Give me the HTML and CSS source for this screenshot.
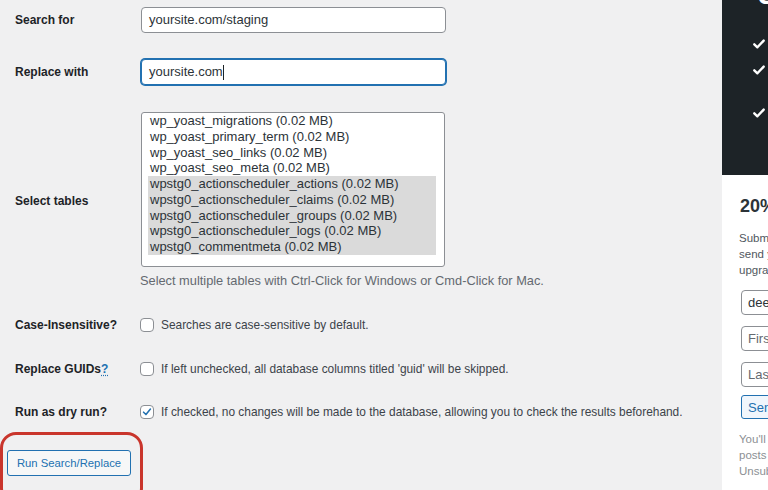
FILE: index.html
```html
<!DOCTYPE html>
<html lang="en">
<head>
<meta charset="utf-8">
<title>Search &amp; Replace</title>
<link rel="stylesheet" href="styles.css">
</head>
<body>
<div class="page">
  <main class="main">
    <div class="row row-search">
      <div class="label">Search for</div>
      <div class="field"><div class="text-input">yoursite.com/staging</div></div>
    </div>
    <div class="row row-replace">
      <div class="label">Replace with</div>
      <div class="field"><div class="text-input focused">yoursite.com<span class="caret"></span></div></div>
    </div>
    <div class="row row-tables">
      <div class="label">Select tables</div>
      <div class="field">
        <div class="listbox">
          <div class="option">wp_yoast_migrations (0.02 MB)</div>
          <div class="option">wp_yoast_primary_term (0.02 MB)</div>
          <div class="option">wp_yoast_seo_links (0.02 MB)</div>
          <div class="option">wp_yoast_seo_meta (0.02 MB)</div>
          <div class="option selected">wpstg0_actionscheduler_actions (0.02 MB)</div>
          <div class="option selected">wpstg0_actionscheduler_claims (0.02 MB)</div>
          <div class="option selected">wpstg0_actionscheduler_groups (0.02 MB)</div>
          <div class="option selected">wpstg0_actionscheduler_logs (0.02 MB)</div>
          <div class="option selected">wpstg0_commentmeta (0.02 MB)</div>
        </div>
        <p class="help">Select multiple tables with Ctrl-Click for Windows or Cmd-Click for Mac.</p>
      </div>
    </div>
    <div class="row row-check row-first-check">
      <div class="label">Case-Insensitive?</div>
      <div class="field check-field"><span class="checkbox"></span><span class="desc">Searches are case-sensitive by default.</span></div>
    </div>
    <div class="row row-check">
      <div class="label">Replace GUIDs<a class="help-link" href="#">?</a></div>
      <div class="field check-field"><span class="checkbox"></span><span class="desc">If left unchecked, all database columns titled 'guid' will be skipped.</span></div>
    </div>
    <div class="row row-check row-last-check">
      <div class="label">Run as dry run?</div>
      <div class="field check-field"><span class="checkbox checked"><svg viewBox="0 0 14 14" width="12" height="12"><polyline points="3,7.2 5.8,10 11,3.6" fill="none" stroke="#2271b1" stroke-width="1.8" stroke-linecap="round" stroke-linejoin="round"/></svg></span><span class="desc">If checked, no changes will be made to the database, allowing you to check the results beforehand.</span></div>
    </div>
    <div class="actions">
      <button class="button" type="button">Run Search/Replace</button>
    </div>
    <div class="highlight"></div>
  </main>
  <aside class="sidebar">
    <div class="promo">
      <div class="promo-title">Upgrade to Pro</div>
      <ul class="promo-list">
        <li><svg class="tick" viewBox="0 0 12 10" width="12" height="10"><polyline points="1.3,5.3 4.4,8.3 10.7,1.6" fill="none" stroke="#fff" stroke-width="2.4" stroke-linecap="round" stroke-linejoin="round"/></svg><span>Push staging sites to live</span></li>
        <li><svg class="tick" viewBox="0 0 12 10" width="12" height="10"><polyline points="1.3,5.3 4.4,8.3 10.7,1.6" fill="none" stroke="#fff" stroke-width="2.4" stroke-linecap="round" stroke-linejoin="round"/></svg><span>Backup and restore<br>your whole website</span></li>
        <li><svg class="tick" viewBox="0 0 12 10" width="12" height="10"><polyline points="1.3,5.3 4.4,8.3 10.7,1.6" fill="none" stroke="#fff" stroke-width="2.4" stroke-linecap="round" stroke-linejoin="round"/></svg><span>Priority support</span></li>
      </ul>
    </div>
    <div class="coupon">
      <h2 class="coupon-title">20% off WP Staging Pro</h2>
      <p class="coupon-text">Submit your email address and we'll<br>send you a discount coupon to<br>upgrade to WP Staging Pro.</p>
      <div class="side-input filled">deepak@example.com</div>
      <div class="side-input">First Name</div>
      <div class="side-input">Last Name</div>
      <button class="side-button" type="button">Send me the coupon</button>
      <p class="coupon-note">You'll also receive occasional blog<br>posts and product updates.<br>Unsubscribe anytime.</p>
    </div>
  </aside>
</div>
</body>
</html>
```
FILE: styles.css
```css
html, body {
  margin: 0;
  padding: 0;
  width: 768px;
  height: 490px;
  overflow: hidden;
}

body {
  background: #f0f0f1;
  font-family: "Liberation Sans", Arial, sans-serif;
  color: #1d2327;
}

.page {
  display: flex;
  height: 490px;
  overflow: hidden;
}

.main {
  position: relative;
  flex: none;
  width: 722px;
  box-sizing: border-box;
  padding-left: 15px;
}

.row {
  display: grid;
  grid-template-columns: 126px 560px;
  align-items: center;
}

.row-search { height: 39px; }
.row-replace { height: 66px; }
.row-tables { padding-top: 7px; }
.row-check { height: 44px; }
.row-first-check { margin-top: 14px; }
.row-last-check { height: 42px; }

.label {
  font-size: 12px;
  font-weight: bold;
  color: #1d2327;
  white-space: nowrap;
}

.help-link {
  color: #2271b1;
  text-decoration: underline dotted;
  text-underline-offset: 2px;
}

.text-input {
  width: 305px;
  height: 26px;
  box-sizing: border-box;
  border: 1px solid #8c8f94;
  border-radius: 4px;
  background: #fff;
  padding: 0 7px;
  font-size: 13px;
  line-height: 24px;
  color: #2c3338;
  display: flex;
  align-items: center;
}

.text-input.focused {
  border-color: #2271b1;
  box-shadow: 0 0 0 1px #2271b1;
}

.caret {
  display: inline-block;
  width: 1px;
  height: 15px;
  background: #1d2327;
}

.listbox {
  width: 304px;
  height: 155px;
  box-sizing: border-box;
  border: 1px solid #8c8f94;
  border-radius: 3px;
  background: #fff;
  padding-top: 0;
  font-size: 13px;
  line-height: 15.75px;
  color: #2c3338;
  overflow: hidden;
}

.option {
  margin: 0 8px 0 6px;
  padding-left: 2px;
  white-space: nowrap;
}

.option.selected {
  background: #dadada;
}

.help {
  margin: 5px 0 0 -1px;
  font-size: 12.8px;
  line-height: 17px;
  color: #646970;
  white-space: nowrap;
}

.check-field {
  display: flex;
  align-items: center;
  margin-left: -1px;
}

.checkbox {
  flex: none;
  width: 14px;
  height: 14px;
  box-sizing: border-box;
  border: 1px solid #8c8f94;
  border-radius: 4px;
  background: #fff;
  display: flex;
  align-items: center;
  justify-content: center;
}

.desc {
  margin-left: 7px;
  font-size: 11.9px;
  color: #3c434a;
  white-space: nowrap;
}

.actions {
  margin: 17px 0 0 -8px;
}

.button {
  width: 124px;
  height: 26px;
  box-sizing: border-box;
  border: 1px solid #2271b1;
  border-radius: 3px;
  background: #f6f7f7;
  color: #2271b1;
  font-family: "Liberation Sans", Arial, sans-serif;
  font-size: 11.3px;
  padding: 0;
}

.highlight {
  position: absolute;
  left: 0;
  top: 432px;
  width: 143px;
  height: 72px;
  box-sizing: border-box;
  border: 3px solid #c9352c;
  border-radius: 16px;
}

.sidebar {
  flex: none;
  width: 300px;
  display: flex;
  flex-direction: column;
}

.promo {
  height: 175px;
  background: #1d2327;
  color: #fff;
  padding-left: 31px;
  overflow: hidden;
}

.promo-title {
  margin: -19px 0 0 4px;
  font-size: 28px;
  line-height: 28px;
  font-weight: bold;
  white-space: nowrap;
}

.promo-list {
  list-style: none;
  margin: 27px 0 0;
  padding: 0;
  display: flex;
  flex-direction: column;
  gap: 9px;
  font-size: 13px;
  line-height: 17px;
}

.promo-list li {
  display: flex;
  align-items: flex-start;
  gap: 8px;
  white-space: nowrap;
}

.tick {
  flex: none;
  margin-top: 3px;
}

.coupon {
  flex: 1;
  background: #fff;
  padding: 0 0 0 17px;
}

.coupon-title {
  margin: 19px 0 0 1px;
  font-size: 18px;
  line-height: 24px;
  font-weight: bold;
  color: #2c3338;
  white-space: nowrap;
}

.coupon-text {
  margin: 12px 0 0;
  font-size: 11.5px;
  line-height: 16px;
  color: #50575e;
  white-space: nowrap;
}

.side-input {
  width: 240px;
  height: 25px;
  box-sizing: border-box;
  margin-left: 2px;
  border: 1px solid #8c8f94;
  border-radius: 4px;
  padding: 0 6px;
  font-size: 13px;
  line-height: 23px;
  color: #646970;
  white-space: nowrap;
}

.coupon-text + .side-input { margin-top: 12px; }
.side-input + .side-input { margin-top: 11px; }

.side-input.filled {
  color: #2c3338;
}

.side-button {
  display: block;
  margin: 8px 0 0 2px;
  height: 24px;
  width: 200px;
  box-sizing: border-box;
  border: 1px solid #2271b1;
  border-radius: 3px;
  background: #f0f6fc;
  color: #2271b1;
  font-family: "Liberation Sans", Arial, sans-serif;
  font-size: 13px;
  text-align: left;
  padding: 0 6px;
}

.coupon-note {
  margin: 12px 0 0;
  font-size: 11.5px;
  line-height: 16px;
  color: #8c8f94;
  white-space: nowrap;
}
```
